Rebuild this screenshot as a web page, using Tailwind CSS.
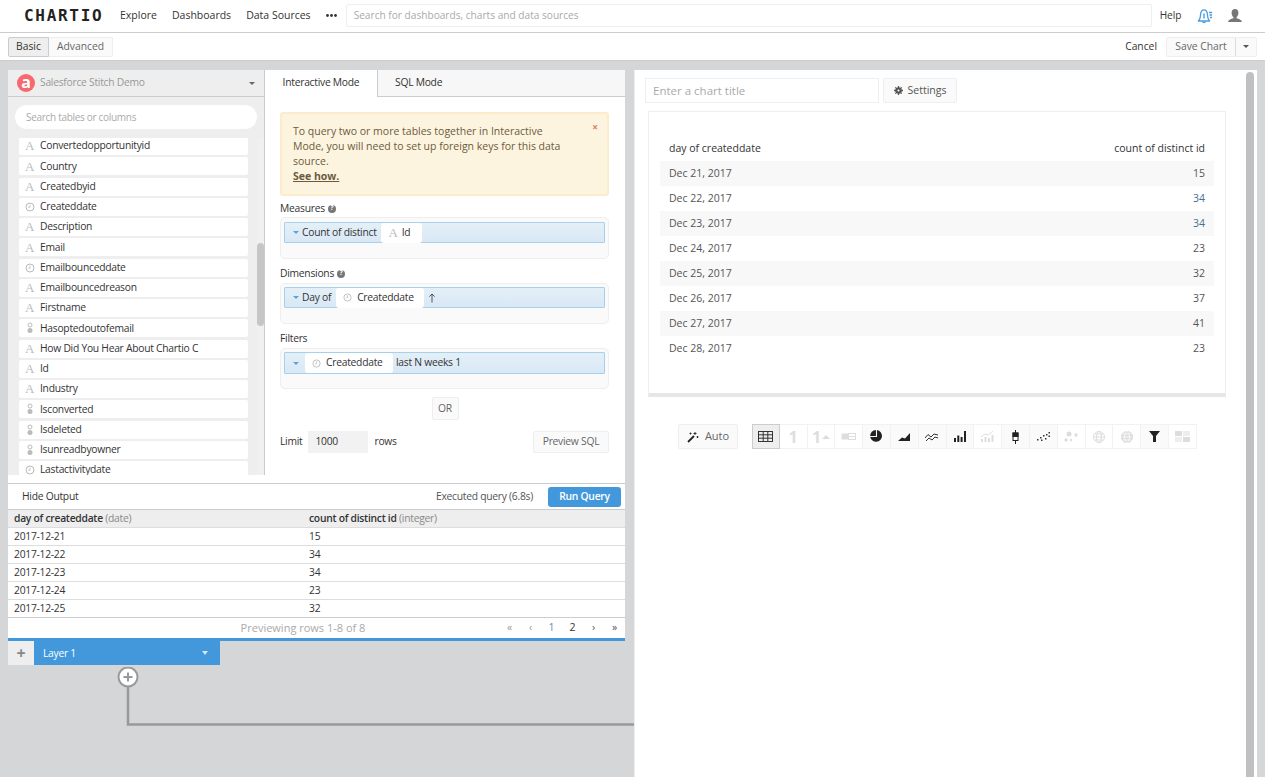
<!DOCTYPE html>
<html>
<head>
<meta charset="utf-8">
<script src="https://cdn.jsdelivr.net/npm/@tailwindcss/browser@4"></script>
</head>
<body class="h-[777px] w-[1265px] overflow-hidden bg-[#d5d6d8] font-['Open_Sans'] text-[10.300px] tracking-[-0.260px] text-[#333]">
<svg class="hidden">
  <symbol id="clock" viewBox="0 0 10 10"><circle cx="5" cy="5" r="4" fill="none" stroke="#bbb" stroke-width="1"/><path d="M5 2.6V5.3H3.2" fill="none" stroke="#bbb" stroke-width=".8"/></symbol>
  <symbol id="bool" viewBox="0 0 8 12"><circle cx="4" cy="3" r="2" fill="none" stroke="#bbb" stroke-width="1"/><rect x="1.5" y="6" width="5" height="5" rx="2.5" fill="#bbb"/></symbol>
</svg>

<!-- top nav -->
<header class="flex h-[33px] items-center border-b border-[#ccc] bg-white pb-[1px] text-[10.500px] tracking-normal">
  <div class="ml-[24px] w-[79px] font-['DejaVu_Sans_Mono'] text-[16px] font-bold leading-none tracking-[1.700px] text-[#222]">CHARTIO</div>
  <nav class="ml-[17px] flex items-center gap-[15px]">
    <span>Explore</span><span>Dashboards</span><span>Data Sources</span>
  </nav>
  <svg class="ml-[15px]" width="11" height="3" viewBox="0 0 11 3" fill="#333"><circle cx="1.5" cy="1.5" r="1.4"/><circle cx="5.5" cy="1.5" r="1.4"/><circle cx="9.5" cy="1.5" r="1.4"/></svg>
  <div class="ml-[9px] flex h-[23px] w-[806px] items-center rounded-[2px] border border-[#eee] pl-[7px] text-[10.150px] text-[#aaa]">Search for dashboards, charts and data sources</div>
  <span class="ml-[8px] text-[10.100px]">Help</span>
  <svg class="ml-[16px]" width="16" height="16" viewBox="0 0 16 16" fill="none" stroke="#4a9ce0" stroke-width="1.3"><path d="M1 13c2-1 2.300-2.500 2.500-6C3.700 3.500 5.500 1.800 7 1.800S10.300 3.500 10.500 7c.2 3.500.5 5 2.500 6z"/><path d="M5.500 13.500c.3 1.600 2.700 1.600 3 0"/><path d="M7 5.500v5M12 4.500h3M12.500 7h2.500M13 9.500h2" stroke-width="1.400"/></svg>
  <svg class="ml-[14px]" width="16" height="16" viewBox="0 0 16 16" fill="#777"><path d="M8 1c2.200 0 3.400 1.700 3.400 3.900 0 1.800-.9 3.300-1.800 4.100v1.300c2 .7 5 1.400 5.400 3.700H1c.4-2.300 3.400-3 5.400-3.700V9C5.500 8.200 4.600 6.700 4.600 4.900 4.600 2.700 5.800 1 8 1z"/></svg>
</header>

<!-- sub bar -->
<div class="flex h-[28px] items-center border-b border-[#ccc] bg-white pl-[8px] pr-[8px] tracking-normal">
  <div class="flex h-[20px]">
    <span class="flex w-[41px] items-center justify-center rounded-l-[2px] border border-[#ccc] bg-[#eee]">Basic</span>
    <span class="flex w-[64px] items-center justify-center rounded-r-[2px] border border-l-0 border-[#eee] bg-[#fafafa] text-[#666]">Advanced</span>
  </div>
  <span class="ml-auto">Cancel</span>
  <div class="ml-[9px] flex h-[20px] rounded-[2px] border border-[#eee] bg-[#fafafa] text-[#666]">
    <span class="flex w-[68px] items-center justify-center">Save Chart</span>
    <span class="flex w-[21px] items-center justify-center border-l border-[#ddd]"><i class="h-0 w-0 border-x-[3.500px] border-t-[3.500px] border-x-transparent border-t-[#555]"></i></span>
  </div>
</div>

<main class="relative flex h-[716px] gap-[9px] pl-[8px] pt-[9px]">
  <!-- left column -->
  <section class="flex w-[617px] flex-col">
    <div class="h-[571px] w-[617px] bg-white">
      <div class="flex h-[405px]">
        <!-- sidebar -->
        <aside class="flex w-[257px] flex-col border-r border-[#ccc] bg-[#eee]">
          <div class="flex h-[27px] items-center border-b border-[#ccc] pl-[9px] pr-[9px] text-[#999]">
            <span class="flex h-[18px] w-[18px] items-center justify-center rounded-full bg-[#f66a6f] pb-[2px] text-[16px] font-bold leading-none text-white">a</span>
            <span class="ml-[5px]">Salesforce Stitch Demo</span>
            <i class="ml-auto h-0 w-0 border-x-[3.500px] border-t-[3.500px] border-x-transparent border-t-[#666]"></i>
          </div>
          <div class="mx-[7px] mt-[8px] flex h-[24px] items-center rounded-full bg-white pl-[11px] text-[10px] tracking-[-0.300px] text-[#aaa]">Search tables or columns</div>
          <div class="mt-[9px] flex h-[337px] overflow-hidden">
            <ul class="mt-[-0.900px] ml-[11px] flex w-[229px] flex-col gap-[2.250px]">
              <li class="flex h-[18px] shrink-0 items-center rounded-[2px] bg-white"><span class="w-[21px] text-center font-['Liberation_Serif'] text-[13px] text-[#bbb]">A</span>Convertedopportunityid</li>
              <li class="flex h-[18px] shrink-0 items-center rounded-[2px] bg-white"><span class="w-[21px] text-center font-['Liberation_Serif'] text-[13px] text-[#bbb]">A</span>Country</li>
              <li class="flex h-[18px] shrink-0 items-center rounded-[2px] bg-white"><span class="w-[21px] text-center font-['Liberation_Serif'] text-[13px] text-[#bbb]">A</span>Createdbyid</li>
              <li class="flex h-[18px] shrink-0 items-center rounded-[2px] bg-white"><span class="flex w-[21px] justify-center"><svg width="10" height="10"><use href="#clock"/></svg></span>Createddate</li>
              <li class="flex h-[18px] shrink-0 items-center rounded-[2px] bg-white"><span class="w-[21px] text-center font-['Liberation_Serif'] text-[13px] text-[#bbb]">A</span>Description</li>
              <li class="flex h-[18px] shrink-0 items-center rounded-[2px] bg-white"><span class="w-[21px] text-center font-['Liberation_Serif'] text-[13px] text-[#bbb]">A</span>Email</li>
              <li class="flex h-[18px] shrink-0 items-center rounded-[2px] bg-white"><span class="flex w-[21px] justify-center"><svg width="10" height="10"><use href="#clock"/></svg></span>Emailbounceddate</li>
              <li class="flex h-[18px] shrink-0 items-center rounded-[2px] bg-white"><span class="w-[21px] text-center font-['Liberation_Serif'] text-[13px] text-[#bbb]">A</span>Emailbouncedreason</li>
              <li class="flex h-[18px] shrink-0 items-center rounded-[2px] bg-white"><span class="w-[21px] text-center font-['Liberation_Serif'] text-[13px] text-[#bbb]">A</span>Firstname</li>
              <li class="flex h-[18px] shrink-0 items-center rounded-[2px] bg-white"><span class="flex w-[21px] justify-center"><svg width="8" height="12"><use href="#bool"/></svg></span>Hasoptedoutofemail</li>
              <li class="flex h-[18px] shrink-0 items-center rounded-[2px] bg-white"><span class="w-[21px] text-center font-['Liberation_Serif'] text-[13px] text-[#bbb]">A</span>How Did You Hear About Chartio C</li>
              <li class="flex h-[18px] shrink-0 items-center rounded-[2px] bg-white"><span class="w-[21px] text-center font-['Liberation_Serif'] text-[13px] text-[#bbb]">A</span>Id</li>
              <li class="flex h-[18px] shrink-0 items-center rounded-[2px] bg-white"><span class="w-[21px] text-center font-['Liberation_Serif'] text-[13px] text-[#bbb]">A</span>Industry</li>
              <li class="flex h-[18px] shrink-0 items-center rounded-[2px] bg-white"><span class="flex w-[21px] justify-center"><svg width="8" height="12"><use href="#bool"/></svg></span>Isconverted</li>
              <li class="flex h-[18px] shrink-0 items-center rounded-[2px] bg-white"><span class="flex w-[21px] justify-center"><svg width="8" height="12"><use href="#bool"/></svg></span>Isdeleted</li>
              <li class="flex h-[18px] shrink-0 items-center rounded-[2px] bg-white"><span class="flex w-[21px] justify-center"><svg width="8" height="12"><use href="#bool"/></svg></span>Isunreadbyowner</li>
              <li class="flex h-[18px] shrink-0 items-center rounded-[2px] bg-white"><span class="flex w-[21px] justify-center"><svg width="10" height="10"><use href="#clock"/></svg></span>Lastactivitydate</li>
            </ul>
            <div class="ml-[9px] w-[7px] bg-[#f0f0f0] pt-[105px]"><div class="h-[83px] rounded-full bg-[#c6c6c6]"></div></div>
          </div>
        </aside>

        <!-- query builder -->
        <div class="flex w-[360px] flex-col">
          <div class="flex h-[27px]">
            <span class="flex w-[113px] items-center justify-center border-r border-[#ccc] bg-white pb-[1px]">Interactive Mode</span>
            <span class="flex flex-1 items-center border-b border-[#ccc] bg-[#f7f7f7] pl-[17px]">SQL Mode</span>
          </div>
          <div class="pl-[15px] pr-[16px] pt-[15px]">
            <div class="relative h-[84px] w-[329px] rounded-[3px] border-2 border-[#fbeccb] bg-[#fdf4df] pl-[11px] pr-[39px] pt-[10px] text-[10.500px] leading-[15px] tracking-normal text-[#6b5b3e]">
              To query two or more tables together in Interactive Mode, you will need to set up foreign keys for this data source.<br><b class="font-bold underline">See how.</b>
              <span class="absolute right-[9px] top-[6px] text-[10px] font-bold text-[#e0796a]">×</span>
            </div>
            <!-- Measures -->
            <div class="mt-[5px] flex h-[15px] items-center">Measures<span class="ml-[3px] flex h-[8px] w-[8px] items-center justify-center rounded-full bg-[#777] text-[7px] font-bold text-white">?</span></div>
            <div class="mt-[1px] h-[42px] w-[329px] rounded-[5px] border border-[#eee] bg-[#fafafa] pl-[3px] pr-[3px] pt-[4px]">
              <div class="flex h-[21px] items-center rounded-[1px] border border-[#a9d0ea] bg-linear-to-b from-[#e4f0f8] to-[#d8e8f5] pl-[8px]">
                <i class="h-0 w-0 border-x-[3.500px] border-t-[3.500px] border-x-transparent border-t-[#5aa3d9]"></i>
                <span class="ml-[3px]">Count of distinct</span>
                <span class="ml-[4px] flex h-[20px] w-[41px] items-center rounded-[3px] bg-white pl-[8px]"><span class="mr-[4px] font-['Liberation_Serif'] text-[13px] text-[#bbb]">A</span>Id</span>
              </div>
            </div>
            <!-- Dimensions -->
            <div class="mt-[6px] flex h-[17px] items-center">Dimensions<span class="ml-[3px] flex h-[8px] w-[8px] items-center justify-center rounded-full bg-[#777] text-[7px] font-bold text-white">?</span></div>
            <div class="mt-[1px] h-[41px] w-[329px] rounded-[5px] border border-[#eee] bg-[#fafafa] pl-[3px] pr-[3px] pt-[3px]">
              <div class="flex h-[21px] items-center rounded-[1px] border border-[#a9d0ea] bg-linear-to-b from-[#e4f0f8] to-[#d8e8f5] pl-[8px]">
                <i class="h-0 w-0 border-x-[3.500px] border-t-[3.500px] border-x-transparent border-t-[#5aa3d9]"></i>
                <span class="ml-[3px]">Day of</span>
                <span class="ml-[5px] flex h-[20px] w-[88px] items-center rounded-[3px] bg-white pl-[7px]"><svg class="mr-[5px]" width="9" height="9"><use href="#clock"/></svg>Createddate</span>
                <svg class="ml-[4px]" width="8" height="10" viewBox="0 0 8 10" fill="none" stroke="#444" stroke-width=".9"><path d="M4 9.500V1M1.300 3.600 4 1l2.700 2.600"/></svg>
              </div>
            </div>
            <!-- Filters -->
            <div class="mt-[6px] flex h-[17px] items-center">Filters</div>
            <div class="mt-[1px] h-[41px] w-[329px] rounded-[5px] border border-[#eee] bg-[#fafafa] pl-[3px] pr-[3px] pt-[3px]">
              <div class="flex h-[22px] items-center rounded-[1px] border border-[#a9d0ea] bg-linear-to-b from-[#e4f0f8] to-[#d8e8f5] pl-[8px]">
                <i class="h-0 w-0 border-x-[3.500px] border-t-[3.500px] border-x-transparent border-t-[#5aa3d9]"></i>
                <span class="ml-[6px] flex h-[20px] w-[88px] items-center rounded-[3px] bg-white pl-[7px]"><svg class="mr-[5px]" width="9" height="9"><use href="#clock"/></svg>Createddate</span>
                <span class="ml-[3px]">last N weeks 1</span>
              </div>
            </div>
            <div class="mt-[8px] flex justify-center"><span class="ml-[1px] flex h-[23px] w-[27px] items-center justify-center rounded-[2px] border border-[#eee] bg-[#fafafa] text-[#666]">OR</span></div>
            <div class="mt-[11px] flex h-[22px] items-center">
              <span>Limit</span>
              <span class="ml-[6px] flex h-[22px] w-[60px] items-center bg-[#f2f2f2] pl-[7px]">1000</span>
              <span class="ml-[6px]">rows</span>
              <span class="ml-auto flex h-[22px] w-[76px] items-center justify-center rounded-[2px] border border-[#eee] bg-[#fafafa] text-[#666]">Preview SQL</span>
            </div>
          </div>
        </div>
      </div>

      <!-- output -->
      <div class="mt-[8px] flex h-[27px] items-center border-y border-[#ccc] pl-[14px] pr-[4px]">
        <span class="pt-[1px]">Hide Output</span>
        <span class="ml-auto text-[#555]">Executed query (6.8s)</span>
        <span class="ml-[15px] flex h-[20px] w-[73px] items-center justify-center rounded-[3px] bg-[#4298db] font-semibold text-white">Run Query</span>
      </div>
      <div class="grid h-[18px] grid-cols-[295px_1fr] items-center border-b border-[#ddd] bg-[#eee] pl-[6px]">
        <span class="font-semibold">day of createddate <span class="font-normal text-[#888]">(date)</span></span>
        <span class="font-semibold">count of distinct id <span class="font-normal text-[#888]">(integer)</span></span>
      </div>
      <div class="grid h-[18px] grid-cols-[295px_1fr] items-center border-b border-[#ddd] pl-[6px]"><span>2017-12-21</span><span>15</span></div>
      <div class="grid h-[18px] grid-cols-[295px_1fr] items-center border-b border-[#ddd] pl-[6px]"><span>2017-12-22</span><span>34</span></div>
      <div class="grid h-[18px] grid-cols-[295px_1fr] items-center border-b border-[#ddd] pl-[6px]"><span>2017-12-23</span><span>34</span></div>
      <div class="grid h-[18px] grid-cols-[295px_1fr] items-center border-b border-[#ddd] pl-[6px]"><span>2017-12-24</span><span>23</span></div>
      <div class="grid h-[18px] grid-cols-[295px_1fr] items-center border-b border-[#ccc] pl-[6px]"><span>2017-12-25</span><span>32</span></div>
      <div class="relative flex h-[20px] items-center justify-center text-[11px] tracking-normal text-[#aaa]">
        <span class="mr-[27px]">Previewing rows 1-8 of 8</span>
        <div class="absolute right-[0px] top-[1px] flex h-[18px] items-center text-[10.500px]">
          <span class="w-[21px] text-center text-[#999]">«</span><span class="w-[21px] text-center text-[#999]">‹</span><span class="w-[21px] text-center text-[#5b8fb9]">1</span><span class="w-[21px] text-center text-[#333]">2</span><span class="w-[21px] text-center text-[#555]">›</span><span class="w-[21px] text-center text-[#555]">»</span>
        </div>
      </div>
      <div class="h-[3px] bg-[#4298db]"></div>
    </div>
    <!-- layers -->
    <div class="flex h-[24px]">
      <span class="flex w-[26px] items-center justify-center bg-[#eee] text-[16px] font-bold leading-none text-[#888]">+</span>
      <span class="flex w-[186px] items-center bg-[#4298db] pl-[9px] pr-[12px] pt-[1px] text-white">Layer 1<i class="ml-auto mb-[2px] h-0 w-0 border-x-[3px] border-t-[4px] border-x-transparent border-t-[#d5e6f5]"></i></span>
    </div>
  </section>

  <!-- connector diagram -->
  <svg class="absolute left-0 top-[606px]" width="634" height="100" viewBox="0 0 634 100" fill="none">
    <path d="M128 15V57.500H634" stroke="#999" stroke-width="2.500"/>
    <circle cx="128" cy="10" r="9.500" fill="#fff" stroke="#999" stroke-width="2"/>
    <path d="M128 5.500v9M123.500 10h9" stroke="#999" stroke-width="2"/>
  </svg>

  <!-- right panel -->
  <section class="z-10 flex h-[707px] text-[10.500px] tracking-normal">
    <div class="w-[609px] border-l border-[#eee] bg-white pl-[10px] pt-[8px]">
      <div class="flex h-[25px]">
        <div class="flex w-[234px] items-center border border-[#eee] pl-[7px] text-[11.500px] text-[#aaa]">Enter a chart title</div>
        <div class="ml-[4px] flex w-[74px] items-center justify-center rounded-[2px] border border-[#eee] bg-[#fafafa] text-[#555]">
          <svg class="mr-[5px]" width="9" height="9" viewBox="0 0 10 10"><circle cx="5" cy="5" r="2.800" fill="none" stroke="#555" stroke-width="1.800"/><path d="M5 0v10M0 5h10M1.500 1.500l7 7M8.500 1.500l-7 7" stroke="#555" stroke-width="1.400"/><circle cx="5" cy="5" r="1.200" fill="#fff"/></svg>Settings
        </div>
      </div>
      <div class="ml-[3px] mt-[8px] h-[286px] w-[578px] border border-b-4 border-[#eee] border-b-[#e6e6e6] px-[11px] pt-[25px]">
        <div class="flex h-[24px] items-center justify-between px-[9px] pb-[1px] text-[#333]"><span>day of createddate</span><span>count of distinct id</span></div>
        <div class="flex h-[25px] items-center justify-between bg-[#f8f8f8] px-[9px] text-[#555]"><span>Dec 21, 2017</span><span>15</span></div>
        <div class="flex h-[25px] items-center justify-between px-[9px] text-[#555]"><span>Dec 22, 2017</span><span class="text-[#4a6f8f]">34</span></div>
        <div class="flex h-[25px] items-center justify-between bg-[#f8f8f8] px-[9px] text-[#555]"><span>Dec 23, 2017</span><span class="text-[#4a6f8f]">34</span></div>
        <div class="flex h-[25px] items-center justify-between px-[9px] text-[#555]"><span>Dec 24, 2017</span><span>23</span></div>
        <div class="flex h-[25px] items-center justify-between bg-[#f8f8f8] px-[9px] text-[#555]"><span>Dec 25, 2017</span><span>32</span></div>
        <div class="flex h-[25px] items-center justify-between px-[9px] text-[#555]"><span>Dec 26, 2017</span><span>37</span></div>
        <div class="flex h-[25px] items-center justify-between bg-[#f8f8f8] px-[9px] text-[#555]"><span>Dec 27, 2017</span><span>41</span></div>
        <div class="flex h-[25px] items-center justify-between px-[9px] text-[#555]"><span>Dec 28, 2017</span><span>23</span></div>
      </div>
      <!-- chart types -->
      <div class="ml-[33px] mt-[27px] flex h-[25px] items-stretch">
        <div class="flex w-[60px] items-center justify-center rounded-[2px] border border-[#eee] bg-[#fafafa] text-[11px] text-[#666]">
          <svg class="mr-[6px]" width="12" height="12" viewBox="0 0 12 12" fill="none" stroke="#222" stroke-width="1.800"><path d="M1 11 7 5"/><path d="M8 1v3M6.500 2.500h3M10.500 5v2M9.500 6h2M3.500 1.500v2M2.500 2.500h2" stroke-width=".9"/></svg>Auto
        </div>
        <div class="ml-[14px] flex h-[25px]">
          <span class="flex w-[27.800px] items-center justify-center border border-[#ccc] bg-[#eee]"><svg width="15" height="11" viewBox="0 0 15 11" fill="none" stroke="#333"><rect x=".5" y=".5" width="14" height="10"/><path d="M.5 3.800h14M.5 7.200h14M5.200.5v10M9.800.5v10"/></svg></span>
          <span class="flex w-[27.800px] items-center justify-center border-y border-r border-[#f2f2f2] text-[16px] font-bold leading-none text-[#ddd]">1</span>
          <span class="flex w-[27.800px] items-center justify-center border-y border-r border-[#f2f2f2] text-[16px] font-bold leading-none text-[#ddd]">1<i class="ml-[1px] h-0 w-0 border-x-[4px] border-b-[4px] border-x-transparent border-b-[#ddd]"></i></span>
          <span class="flex w-[27.800px] items-center justify-center border-y border-r border-[#f2f2f2]"><svg width="15" height="7" viewBox="0 0 15 7"><rect x="7.500" y=".5" width="7" height="6" fill="none" stroke="#ddd"/><rect x=".5" y=".5" width="7" height="6" fill="#ddd"/><path d="M8 3.500h6" stroke="#ddd"/></svg></span>
          <span class="flex w-[27.800px] items-center justify-center border-y border-r border-[#f2f2f2] bg-[#fafafa]"><svg width="13" height="13" viewBox="0 0 12 12" fill="#222"><path d="M6.500 0a5.500 5.500 0 1 1-6.300 6.500H6.500z"/><path d="M5.500 0v5.500H.1A5.500 5.500 0 0 1 5.500 0z"/></svg></span>
          <span class="flex w-[27.800px] items-center justify-center border-y border-r border-[#f2f2f2] bg-[#fafafa]"><svg width="12" height="8" viewBox="0 0 12 8" fill="#222"><path d="M0 8 4 4.500 7 5.500 12 0V8z"/></svg></span>
          <span class="flex w-[27.800px] items-center justify-center border-y border-r border-[#f2f2f2] bg-[#fafafa]"><svg width="14" height="10" viewBox="0 0 14 10" fill="none" stroke="#333"><path d="M0 6 3 2.500l3 2.500 3-3 4 1M1 9l3-3 3 2 3-3 3 1"/></svg></span>
          <span class="flex w-[27.800px] items-center justify-center border-y border-r border-[#f2f2f2] bg-[#fafafa]"><svg width="12" height="11" viewBox="0 0 12 11" fill="#222"><rect y="7" width="2" height="4"/><rect x="3.300" y="4.500" width="2" height="6.500"/><rect x="6.600" y="6" width="2" height="5"/><rect x="10" width="2" height="11"/></svg></span>
          <span class="flex w-[27.800px] items-center justify-center border-y border-r border-[#f2f2f2]"><svg width="13" height="11" viewBox="0 0 13 11" fill="#ddd"><rect y="8" width="2" height="3"/><rect x="3.500" y="6" width="2" height="5"/><rect x="7" y="7" width="2" height="4"/><rect x="10.500" y="4" width="2" height="7"/><path d="M0 6 4 3l3 1 5-4" fill="none" stroke="#ddd"/></svg></span>
          <span class="flex w-[27.800px] items-center justify-center border-y border-r border-[#f2f2f2] bg-[#fafafa]"><svg width="7" height="14" viewBox="0 0 7 14" fill="none" stroke="#222"><path d="M3.500 0v14"/><rect x="1" y="3" width="5" height="7.500" fill="#fff"/><rect x="1" y="3" width="5" height="3.500" fill="#222"/></svg></span>
          <span class="flex w-[27.800px] items-center justify-center border-y border-r border-[#f2f2f2] bg-[#fafafa]"><svg width="13" height="9" viewBox="0 0 13 9" fill="#333"><rect y="7" width="1.500" height="1.500"/><rect x="3" y="5" width="1.500" height="1.500"/><rect x="4" y="7.500" width="1.500" height="1.500"/><rect x="6" y="3" width="1.500" height="1.500"/><rect x="8" y="6" width="1.500" height="1.500"/><rect x="9" y="2" width="1.500" height="1.500"/><rect x="11.500" y="0" width="1.500" height="1.500"/><rect x="11.500" y="3.500" width="1.500" height="1.500"/></svg></span>
          <span class="flex w-[27.800px] items-center justify-center border-y border-r border-[#f2f2f2]"><svg width="14" height="11" viewBox="0 0 14 11" fill="#ddd"><circle cx="5" cy="3" r="2.500"/><circle cx="12" cy="4" r="1.700"/><circle cx="2" cy="9" r="1.700"/><circle cx="7" cy="9" r="1.300"/></svg></span>
          <span class="flex w-[27.800px] items-center justify-center border-y border-r border-[#f2f2f2]"><svg width="12" height="12" viewBox="0 0 12 12" fill="none" stroke="#ddd"><circle cx="6" cy="6" r="5.500"/><ellipse cx="6" cy="6" rx="2.500" ry="5.500"/><path d="M.5 6h11M1.500 3h9M1.500 9h9"/></svg></span>
          <span class="flex w-[27.800px] items-center justify-center border-y border-r border-[#f2f2f2]"><svg width="12" height="12" viewBox="0 0 12 12" fill="#ddd" stroke="#ccc" stroke-width=".7"><circle cx="6" cy="6" r="5.500"/><ellipse cx="6" cy="6" rx="2.500" ry="5.500" fill="none" stroke="#fff"/><path d="M.5 6h11M1.500 3h9M1.500 9h9" stroke="#fff"/></svg></span>
          <span class="flex w-[27.800px] items-center justify-center border-y border-r border-[#f2f2f2] bg-[#fafafa]"><svg width="11" height="11" viewBox="0 0 11 11" fill="#222"><path d="M0 0h11L7 5v6H4V5z"/></svg></span>
          <span class="flex w-[27.800px] items-center justify-center border-y border-r border-[#f2f2f2]"><svg width="15" height="11" viewBox="0 0 15 11" fill="#ddd"><rect width="7" height="5"/><rect x="8" width="7" height="5" opacity=".5"/><rect y="6" width="7" height="5" opacity=".5"/><rect x="8" y="6" width="7" height="5"/></svg></span>
        </div>
      </div>
    </div>
    <div class="w-[14px] bg-white px-[3px] pt-[2px]"><div class="h-full rounded-t-full bg-[#c0c0c0]"></div></div>
  </section>
</main>
</body>
</html>
